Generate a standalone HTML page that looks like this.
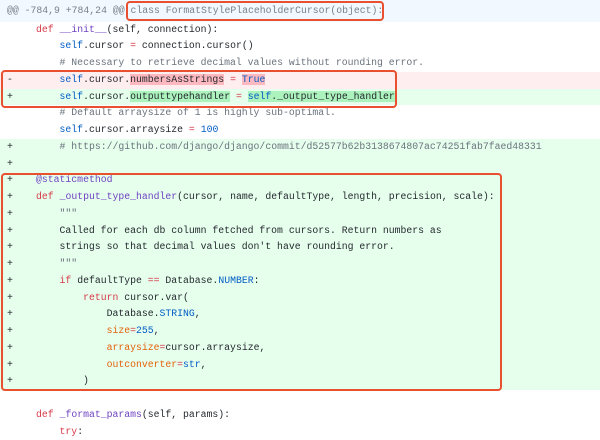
<!DOCTYPE html>
<html><head><meta charset="utf-8"><style>
body{margin:0;width:600px;height:439px;overflow:hidden;background:#fff;font-family:"Liberation Mono","DejaVu Sans Mono",monospace;font-size:9.8px;color:#24292e;position:relative}
.r{position:absolute;left:0;width:600px;height:16.75px;line-height:16.75px;white-space:pre}
.m{position:absolute;left:7px;top:0}
.c{position:absolute;left:12.5px;top:0}
.hd{position:absolute;left:0;top:0;width:600px;height:21.6px;background:#f1f8ff;line-height:21px;white-space:pre;color:#7a8189}
.a{background:#e6ffed}.d{background:#ffeef0}
.k{color:#d73a49}.s{color:#005cc5}.g{color:#6a737d}.f{color:#6f42c1}.o{color:#e36209}
.hx{background:#acf2bd}.hy{background:#fdb8c0}
.b{position:absolute;border:2px solid #e8502f;border-radius:4px;box-sizing:border-box}
</style></head><body>
<div class="hd"><span style="position:absolute;left:7px">@@ -784,9 +784,24 @@ class FormatStylePlaceholderCursor(object):</span></div>
<div class="r" style="top:21.6px"><span class="c">    <span class="k">def</span> <span class="f">__init__</span>(self, connection):</span></div>
<div class="r" style="top:38.35px"><span class="c">        <span class="s">self</span>.cursor <span class="k">=</span> connection.cursor()</span></div>
<div class="r" style="top:55.1px"><span class="c">        <span class="g"># Necessary to retrieve decimal values without rounding error.</span></span></div>
<div class="r d" style="top:71.85px"><span class="m">-</span><span class="c">        <span class="s">self</span>.cursor.<span class="hy">numbersAsStrings</span> <span class="k">=</span> <span class="hy"><span class="s">True</span></span></span></div>
<div class="r a" style="top:88.6px"><span class="m">+</span><span class="c">        <span class="s">self</span>.cursor.<span class="hx">outputtypehandler</span> <span class="k">=</span> <span class="hx"><span class="s">self</span>._output_type_handler</span></span></div>
<div class="r" style="top:105.35px"><span class="c">        <span class="g"># Default arraysize of 1 is highly sub-optimal.</span></span></div>
<div class="r" style="top:122.1px"><span class="c">        <span class="s">self</span>.cursor.arraysize <span class="k">=</span> <span class="s">100</span></span></div>
<div class="r a" style="top:138.85px"><span class="m">+</span><span class="c">        <span class="g"># https://github.com/django/django/commit/d52577b62b3138674807ac74251fab7faed48331</span></span></div>
<div class="r a" style="top:155.6px"><span class="m">+</span></div>
<div class="r a" style="top:172.35px"><span class="m">+</span><span class="c">    <span class="f">@staticmethod</span></span></div>
<div class="r a" style="top:189.1px"><span class="m">+</span><span class="c">    <span class="k">def</span> <span class="f">_output_type_handler</span>(cursor, name, defaultType, length, precision, scale):</span></div>
<div class="r a" style="top:205.85px"><span class="m">+</span><span class="c">        <span class="g">"""</span></span></div>
<div class="r a" style="top:222.6px"><span class="m">+</span><span class="c">        Called for each db column fetched from cursors. Return numbers as</span></div>
<div class="r a" style="top:239.35px"><span class="m">+</span><span class="c">        strings so that decimal values don't have rounding error.</span></div>
<div class="r a" style="top:256.1px"><span class="m">+</span><span class="c">        <span class="g">"""</span></span></div>
<div class="r a" style="top:272.85px"><span class="m">+</span><span class="c">        <span class="k">if</span> defaultType <span class="k">==</span> Database.<span class="s">NUMBER</span>:</span></div>
<div class="r a" style="top:289.6px"><span class="m">+</span><span class="c">            <span class="k">return</span> cursor.var(</span></div>
<div class="r a" style="top:306.35px"><span class="m">+</span><span class="c">                Database.<span class="s">STRING</span>,</span></div>
<div class="r a" style="top:323.1px"><span class="m">+</span><span class="c">                <span class="o">size</span><span class="k">=</span><span class="s">255</span>,</span></div>
<div class="r a" style="top:339.85px"><span class="m">+</span><span class="c">                <span class="o">arraysize</span><span class="k">=</span>cursor.arraysize,</span></div>
<div class="r a" style="top:356.6px"><span class="m">+</span><span class="c">                <span class="o">outconverter</span><span class="k">=</span><span class="s">str</span>,</span></div>
<div class="r a" style="top:373.35px"><span class="m">+</span><span class="c">            )</span></div>
<div class="r" style="top:390.1px"></div>
<div class="r" style="top:406.85px"><span class="c">    <span class="k">def</span> <span class="f">_format_params</span>(self, params):</span></div>
<div class="r" style="top:423.6px"><span class="c">        <span class="k">try</span>:</span></div>
<div class="b" style="left:126px;top:1px;width:258px;height:20px"></div>
<div class="b" style="left:1px;top:70px;width:396px;height:38px"></div>
<div class="b" style="left:1px;top:173px;width:501px;height:218px"></div>
</body></html>
